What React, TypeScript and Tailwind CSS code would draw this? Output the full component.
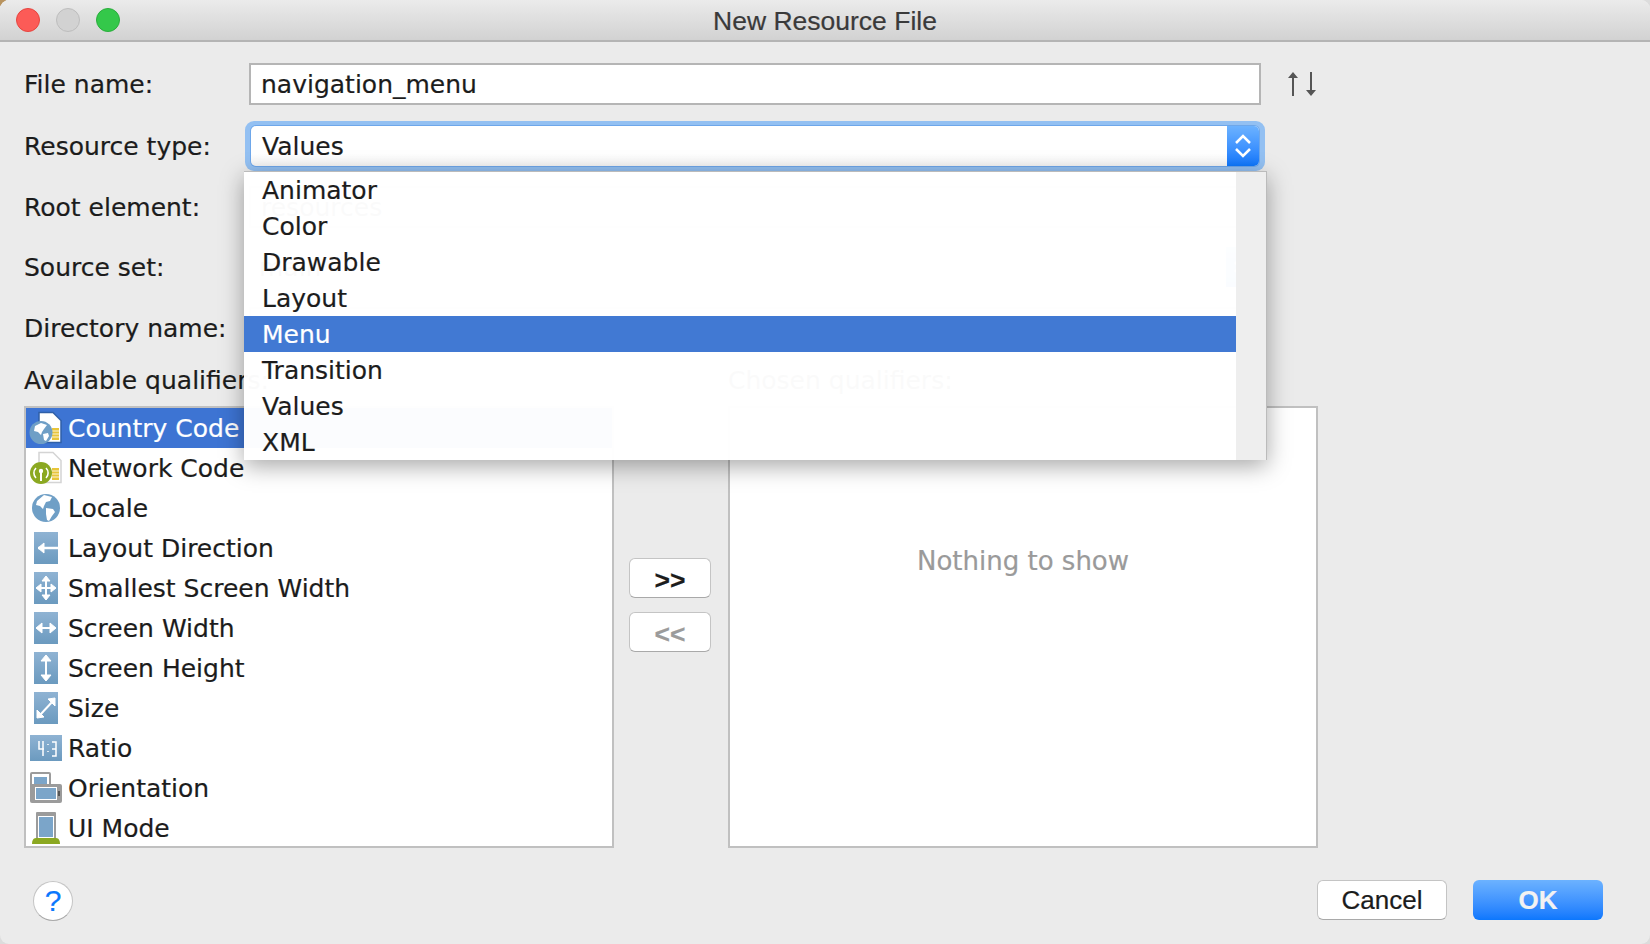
import React from 'react';

const blueBox = 'url(#boxBlue)';

const SimGlyph = ({ badge }: { badge: 'globe' | 'net' }) => (
  <svg width="34" height="34" viewBox="0 0 34 34">
    <path d="M10 1.500h14l8 8v22H10z" fill="#fff" stroke={badge === 'globe' ? '#2f5fa8' : '#d4d4d4'} strokeWidth="1.500" />
    <rect x="23" y="17" width="7" height="12" fill="#e8c53a" />
    <path d="M23 20h7M23 23h7M23 26h7" stroke="#fff" strokeWidth="0.800" />
    {badge === 'globe' ? (
      <>
        <circle cx="12" cy="21.500" r="11.500" fill="#6f9fc6" />
        <path d="M6 15l6-3 6 2-3 4-2 3-1 3-3-3-4-1zM14 23l5-1 1 3-3 5-2-1z" fill="#fff" />
      </>
    ) : (
      <>
        <circle cx="12" cy="22" r="11" fill="#8ba821" />
        <path d="M7 27a7 7 0 0 1 0-10M17 17a7 7 0 0 1 0 10" fill="none" stroke="#fff" strokeWidth="1.600" />
        <circle cx="12" cy="20" r="2.200" fill="#fff" />
        <path d="M12 21v9" stroke="#fff" strokeWidth="2" />
      </>
    )}
  </svg>
);

const Globe = () => (
  <svg width="34" height="34" viewBox="0 0 34 34">
    <circle cx="17" cy="17" r="14" fill="#6f9fc6" />
    <path d="M8 10l7-6 8 2-2 4-4 1-2 4-1 3-3-3-4-1zM17 17l7 1 2 3-3 4-3 5-2-1-1-6z" fill="#fff" />
  </svg>
);

const BoxGlyph = ({ children }: { children: React.ReactNode }) => (
  <svg width="34" height="34" viewBox="0 0 34 34">
    <rect x="5" y="1" width="24" height="32" fill={blueBox} />
    <g fill="#fff" stroke="#fff">{children}</g>
  </svg>
);

const Ratio = () => (
  <svg width="34" height="28" viewBox="0 0 34 28">
    <rect x="1" y="1" width="32" height="26" fill={blueBox} />
    <path d="M10 7v8h5M14 7v15M19 10v1M19 17v1M23 8h4v14h-4M23 15h4" fill="none" stroke="#fff" strokeWidth="1.500" />
  </svg>
);

const Orientation = () => (
  <svg width="34" height="34" viewBox="0 0 34 34">
    <rect x="2" y="2" width="19" height="24" rx="1" fill="#fff" stroke="#9b9b9b" strokeWidth="2" />
    <rect x="5" y="6" width="13" height="8" fill="#7ba5c9" />
    <rect x="1" y="13" width="32" height="19" rx="2" fill="#9b9b9b" />
    <rect x="6" y="16" width="22" height="13" fill="#fff" />
    <rect x="7" y="17" width="20" height="11" fill="#7ba5c9" />
    <rect x="29" y="20" width="2" height="5" fill="#555" />
  </svg>
);

const UiMode = () => (
  <svg width="34" height="34" viewBox="0 0 34 34">
    <rect x="7" y="1" width="20" height="27" rx="1" fill="#9b9b9b" />
    <rect x="9" y="5" width="16" height="22" fill="#fff" />
    <rect x="10" y="6" width="14" height="20" fill="#7ba5c9" />
    <path d="M3 33c0-3 1-6 4-6h20c3 0 4 3 4 6z" fill="#8ba821" />
  </svg>
);

const qualifiers: { name: string; icon: React.ReactNode }[] = [
  { name: 'Country Code', icon: <SimGlyph badge="globe" /> },
  { name: 'Network Code', icon: <SimGlyph badge="net" /> },
  { name: 'Locale', icon: <Globe /> },
  { name: 'Layout Direction', icon: <BoxGlyph><path d="M9 17h20" strokeWidth="2.500" /><path d="M9 17l6-5v10z" /></BoxGlyph> },
  {
    name: 'Smallest Screen Width',
    icon: <BoxGlyph><path d="M10 17h14M17 8v18" strokeWidth="2" /><path d="M7 17l5-4v8zM27 17l-5-4v8zM17 5l-4 5h8zM17 29l-4-5h8z" /></BoxGlyph>,
  },
  { name: 'Screen Width', icon: <BoxGlyph><path d="M10 17h14" strokeWidth="2" /><path d="M7 17l6-5v10zM27 17l-6-5v10z" /></BoxGlyph> },
  { name: 'Screen Height', icon: <BoxGlyph><path d="M17 8v18" strokeWidth="2" /><path d="M17 4l-5 6h10zM17 30l-5-6h10z" /></BoxGlyph> },
  { name: 'Size', icon: <BoxGlyph><path d="M11 24l13-14" strokeWidth="2" /><path d="M8 27v-8l7 7zM26 7v8l-7-7z" /></BoxGlyph> },
  { name: 'Ratio', icon: <Ratio /> },
  { name: 'Orientation', icon: <Orientation /> },
  { name: 'UI Mode', icon: <UiMode /> },
];

const popupItems = ['Animator', 'Color', 'Drawable', 'Layout', 'Menu', 'Transition', 'Values', 'XML'];

const Chevrons = () => (
  <svg width="18" height="26" viewBox="0 0 18 26" fill="none" stroke="#fff" strokeWidth="2.500">
    <path d="M2 10l7-7 7 7M2 16l7 7 7-7" />
  </svg>
);

const StepperButton = () => (
  <div className="w-[32px] h-full bg-gradient-to-b from-[#6cb2ff] to-[#0a77fd] rounded-r-[5px] flex items-center justify-center">
    <Chevrons />
  </div>
);

const Label = ({ children }: { children: React.ReactNode }) => (
  <div className="w-[225px] shrink-0 text-[#1c1c1c]">{children}</div>
);

export default function App() {
  return (
    <div className="relative w-[1650px] h-[944px] bg-[#dcdcdc] overflow-hidden font-['DejaVu_Sans',sans-serif] text-[25px] leading-none [-webkit-text-stroke:0.2px_currentColor]">
      <svg width="0" height="0" className="absolute">
        <defs>
          <linearGradient id="boxBlue" x1="0" y1="0" x2="0" y2="1">
            <stop offset="0" stopColor="#8fb3d3" />
            <stop offset="1" stopColor="#6b9abf" />
          </linearGradient>
        </defs>
      </svg>
      <div className="absolute left-0 top-0 w-[6px] h-[6px] bg-[#b8935f]" />
      <div className="relative w-full h-full bg-[#ebebeb] rounded-[9px] overflow-hidden flex flex-col">
        {/* Title bar */}
        <div className="relative h-[42px] shrink-0 bg-gradient-to-b from-[#ebebeb] to-[#d2d2d2] border-b-2 border-[#b4b4b4] flex items-center justify-center">
          <div className="absolute left-[16px] top-[8px] flex gap-[16px]">
            <div className="w-[24px] h-[24px] rounded-full bg-[#fc5b57] border border-[#e5453f]" />
            <div className="w-[24px] h-[24px] rounded-full bg-[#d2d2d2] border border-[#bdbdbd]" />
            <div className="w-[24px] h-[24px] rounded-full bg-[#34c84a] border border-[#2aad3c]" />
          </div>
          <span className="pt-[2px] font-['Liberation_Sans',sans-serif] text-[26.500px] text-[#3a3a3a]">New Resource File</span>
        </div>

        {/* Form rows */}
        <div className="pl-[24px] pt-[21px]">
          <div className="flex items-center h-[42px]">
            <Label>File name:</Label>
            <div className="w-[1012px] h-[42px] bg-white border-2 border-[#b5b5b5] flex items-center pl-[10px] text-[#1c1c1c]">
              navigation_menu
            </div>
            <svg className="ml-[24px]" width="34" height="24" viewBox="0 0 34 24" fill="#555">
              <path d="M7 4h2v20H7zM25 0h2v20h-2z" />
              <path d="M8 0l5 6H3zM26 24l-5-6h10z" />
            </svg>
          </div>
          <div className="flex items-center h-[50px] mt-[16px]">
            <div className="pt-[1px]"><Label>Resource type:</Label></div>
            <div className="ml-[-4px] w-[1020px] h-[50px] py-[5px] px-[6px] rounded-[9px] bg-[#93c0f2]">
              <div className="h-full rounded-[5px] bg-gradient-to-b from-white from-70% to-[#f4f4f4] ring-1 ring-[#6ea7ea] flex justify-between items-center pl-[11px] text-[#1c1c1c]">
                <span className="pt-[1px]">Values</span>
                <StepperButton />
              </div>
            </div>
          </div>
          <div className="flex items-center h-[42px] mt-[15px]">
            <Label>Root element:</Label>
            <div className="w-[1012px] h-[42px] bg-white border-2 border-[#b5b5b5] flex items-center pl-[10px] text-[#1c1c1c]">
              resources
            </div>
          </div>
          <div className="flex items-center h-[40px] mt-[19px] mb-[1px]">
            <Label>Source set:</Label>
            <div className="ml-[-2px] w-[1011px] h-[40px] bg-white rounded-[5px] flex justify-between items-center pl-[12px] text-[#1c1c1c]">
              main
              <StepperButton />
            </div>
          </div>
          <div className="flex items-center h-[42px] mt-[20px]">
            <Label>Directory name:</Label>
            <div className="w-[1012px] h-[42px] bg-white border-2 border-[#b5b5b5] flex items-center pl-[10px] text-[#1c1c1c]">
              values
            </div>
          </div>
        </div>

        {/* Qualifiers */}
        <div className="flex pl-[24px] mt-[17px] h-[498px]">
          <div className="w-[590px] flex flex-col">
            <div className="h-[40px] pb-[12px] text-[#1c1c1c] flex items-center">Available qualifiers:</div>
            <div className="h-[442px] bg-white border-2 border-[#c0c0c0] overflow-hidden">
              {qualifiers.map((q, i) => (
                <div
                  key={q.name}
                  className={`h-[40px] flex items-center gap-[5px] pl-[3px] ${i === 0 ? 'bg-[#3d74d3] text-white' : 'text-[#1c1c1c]'}`}
                >
                  <div className="w-[34px] h-[34px] flex items-center justify-center">{q.icon}</div>
                  <span className="pt-[1px]">{q.name}</span>
                </div>
              ))}
            </div>
          </div>
          <div className="w-[114px] pr-[2px] flex flex-col items-center pt-[192px] gap-[14px] font-['Liberation_Sans',sans-serif] font-bold text-[26.500px]">
            <button className="w-[82px] h-[40px] pt-[4px] bg-white rounded-[6px] border border-[#c4c4c4] border-b-[#a9a9a9] text-[#1c1c1c]">&gt;&gt;</button>
            <button className="w-[82px] h-[40px] pt-[4px] bg-white rounded-[6px] border border-[#c4c4c4] border-b-[#a9a9a9] text-[#9b9b9b]">&lt;&lt;</button>
          </div>
          <div className="w-[590px] flex flex-col">
            <div className="h-[40px] pb-[12px] text-[#1c1c1c] flex items-center">Chosen qualifiers:</div>
            <div className="h-[442px] bg-white border-2 border-[#c0c0c0] flex items-start justify-center pt-[140px] text-[26px] text-[#9a9a9a]">
              Nothing to show
            </div>
          </div>
        </div>

        {/* Footer */}
        <div className="flex-1 flex items-start pl-[33px] pr-[47px] pt-[16px]">
          <div className="w-[40px] h-[40px] mt-[1px] rounded-full bg-white border border-[#c4c4c4] border-b-[#a9a9a9] flex items-center justify-center font-['Liberation_Sans',sans-serif] text-[30px] text-[#0a77fd]">
            ?
          </div>
          <div className="ml-auto flex gap-[26px] font-['Liberation_Sans',sans-serif] text-[26px]">
            <button className="w-[130px] h-[40px] bg-white rounded-[6px] border border-[#c4c4c4] border-b-[#a9a9a9] text-[#1c1c1c]">Cancel</button>
            <button className="w-[130px] h-[40px] rounded-[6px] bg-gradient-to-b from-[#6cb2ff] to-[#0a77fd] font-bold text-[#f2f2f2]">OK</button>
          </div>
        </div>

        {/* Open dropdown of the Resource type combo */}
        <div className="absolute left-[244px] top-[171px] w-[1023px] h-[289px] flex bg-white/[.98] border-t border-r border-[#bbbbbb] shadow-[0_6px_22px_rgba(0,0,0,0.35)]">
          <div className="w-[992px]">
            {popupItems.map((item) => (
              <div
                key={item}
                className={`h-[36px] flex items-center pl-[18px] pt-[1px] ${item === 'Menu' ? 'bg-[#4179d3] text-white' : 'text-[#1c1c1c]'}`}
              >
                {item}
              </div>
            ))}
          </div>
          <div className="flex-1 bg-[#ececec]/90" />
        </div>
      </div>
    </div>
  );
}
